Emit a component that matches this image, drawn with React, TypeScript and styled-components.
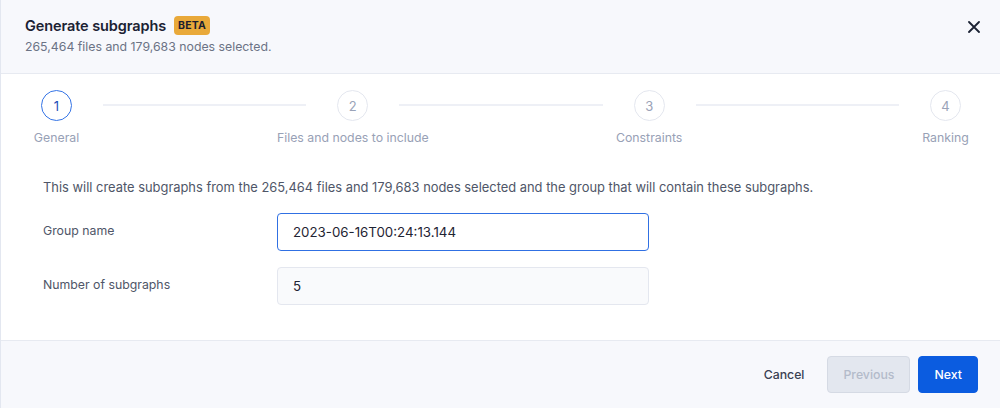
import React, {FC} from 'react';
import styled, {createGlobalStyle} from "styled-components";

const GlobalStyle = createGlobalStyle`
  html, body {
    margin: 0;
    padding: 0;
    background: #ffffff;
  }
  body {
    font-family: Inter, "Noto Sans", sans-serif;
    -webkit-font-smoothing: antialiased;
  }
`

const steps = ['General', 'Files and nodes to include', 'Constraints', 'Ranking']

type StepProps = {
    index: number
    label: string
    active: boolean
}

const Step: FC<StepProps> = ({index, label, active}) => {
    return (
        <StepItem>
            <Circle active={active}>{index}</Circle>
            <StepLabel>{label}</StepLabel>
        </StepItem>
    )
}

const App: FC = () => {
    return (
        <>
            <GlobalStyle/>
            <Dialog>
                <Header>
                    <div>
                        <TitleRow>
                            <Title>Generate subgraphs</Title>
                            <Badge>BETA</Badge>
                        </TitleRow>
                        <Subtitle>265,464 files and 179,683 nodes selected.</Subtitle>
                    </div>
                    <CloseButton aria-label="Close">
                        <svg width="12" height="12" viewBox="0 0 12 12" fill="none">
                            <path d="M1 1L11 11M11 1L1 11" stroke="#1b2233" strokeWidth="1.8" strokeLinecap="round"/>
                        </svg>
                    </CloseButton>
                </Header>

                <Body>
                    <Stepper>
                        {steps.map((s, i) => (
                            <React.Fragment key={s}>
                                {i > 0 && <Connector/>}
                                <Step index={i + 1} label={s} active={i === 0}/>
                            </React.Fragment>
                        ))}
                    </Stepper>

                    <Description>
                        This will create subgraphs from the 265,464 files and 179,683 nodes selected and the group that will contain these subgraphs.
                    </Description>

                    <Form>
                        <Label>Group name</Label>
                        <Input focused={true} defaultValue="2023-06-16T00:24:13.144"/>
                        <Label>Number of subgraphs</Label>
                        <Input focused={false} defaultValue="5"/>
                    </Form>
                </Body>

                <Footer>
                    <TextButton>Cancel</TextButton>
                    <DisabledButton disabled>Previous</DisabledButton>
                    <PrimaryButton>Next</PrimaryButton>
                </Footer>
            </Dialog>
        </>
    );
};

export default App;

const Dialog = styled.div`
  width: 1000px;
  height: 408px;
  box-sizing: border-box;
  border-left: 1px solid #e3e7f0;
  display: flex;
  flex-direction: column;
  background: #ffffff;
`
const Header = styled.div`
  height: 74px;
  box-sizing: border-box;
  background: #f7f8fc;
  border-bottom: 1px solid #e7eaf1;
  padding: 15px 19px 0 24px;
  display: flex;
  justify-content: space-between;
  align-items: flex-start;
`
const TitleRow = styled.div`
  display: flex;
  align-items: center;
  gap: 8px;
`
const Title = styled.h1`
  margin: 0;
  font-size: 14.5px;
  font-weight: 600;
  letter-spacing: -0.1px;
  color: #1b2233;
  line-height: 21px;
`
const Badge = styled.span`
  background: #e9a93a;
  color: #1b1d2e;
  font-size: 10.5px;
  font-weight: 700;
  letter-spacing: 0.2px;
  border-radius: 4px;
  padding: 2px 4px;
  line-height: 15px;
`
const Subtitle = styled.div`
  margin-top: 2px;
  font-size: 12.3px;
  color: #6b7385;
  line-height: 18px;
`
const CloseButton = styled.button`
  border: none;
  background: none;
  padding: 0;
  margin-top: 5px;
  width: 14px;
  height: 14px;
  display: flex;
  align-items: center;
  justify-content: center;
  cursor: pointer;
`
const Body = styled.div`
  flex: 1;
  padding: 16px 39px 0 40px;
  box-sizing: border-box;
`
const Stepper = styled.div`
  display: flex;
  align-items: flex-start;
  height: 72px;
`
const StepItem = styled.div`
  width: 31px;
  display: flex;
  flex-direction: column;
  align-items: center;
`
const Circle = styled.div<{ active: boolean }>`
  width: 31px;
  height: 31px;
  box-sizing: border-box;
  border-radius: 50%;
  border: 1.5px solid ${({active}) => active ? '#3574e6' : '#e4e7ef'};
  color: ${({active}) => active ? '#1d4fb8' : '#9aa3b8'};
  font-size: 13px;
  display: flex;
  align-items: center;
  justify-content: center;
  flex-shrink: 0;
`
const StepLabel = styled.div`
  margin-top: 8px;
  white-space: nowrap;
  font-size: 12.3px;
  color: #98a1b6;
  line-height: 18px;
`
const Connector = styled.div`
  flex: 1;
  height: 2px;
  background: #eef0f6;
  margin: 14px 31px 0 31px;
`
const Description = styled.p`
  margin: 17px 0 0 2px;
  font-size: 12.9px;
  color: #4f5668;
  line-height: 18px;
`
const Form = styled.div`
  margin: 16px 0 0 2px;
  display: grid;
  grid-template-columns: 234px 372px;
  row-gap: 16px;
  align-items: center;
`
const Label = styled.label`
  font-size: 12.3px;
  color: #4f5668;
  margin-top: -4px;
`
const Input = styled.input<{ focused: boolean }>`
  height: 38px;
  box-sizing: border-box;
  border-radius: 4px;
  border: ${({focused}) => focused ? '1.5px solid #3070e3' : '1px solid #e4e7ef'};
  background: ${({focused}) => focused ? '#ffffff' : '#f9fafc'};
  padding: 0 15px;
  font-family: Inter, "Noto Sans", sans-serif;
  font-size: 13.3px;
  color: #1f2433;
  outline: none;
`
const Footer = styled.div`
  height: 68px;
  box-sizing: border-box;
  background: #f7f8fc;
  border-top: 1px solid #e7eaf1;
  padding: 0 22px 0 0;
  display: flex;
  justify-content: flex-end;
  align-items: center;
  gap: 8px;
`
const BaseButton = styled.button`
  height: 37px;
  box-sizing: border-box;
  border-radius: 4px;
  font-family: Inter, "Noto Sans", sans-serif;
  font-size: 12.3px;
  font-weight: 500;
  padding: 0 15px;
  cursor: pointer;
`
const TextButton = styled(BaseButton)`
  background: none;
  border: none;
  color: #3a4152;
`
const DisabledButton = styled(BaseButton)`
  background: #e3e7ef;
  border: 1px solid #d5dae4;
  color: #b3bbca;
  cursor: default;
`
const PrimaryButton = styled(BaseButton)`
  background: #0b5ce0;
  border: 1px solid #0b5ce0;
  color: #ffffff;
`
